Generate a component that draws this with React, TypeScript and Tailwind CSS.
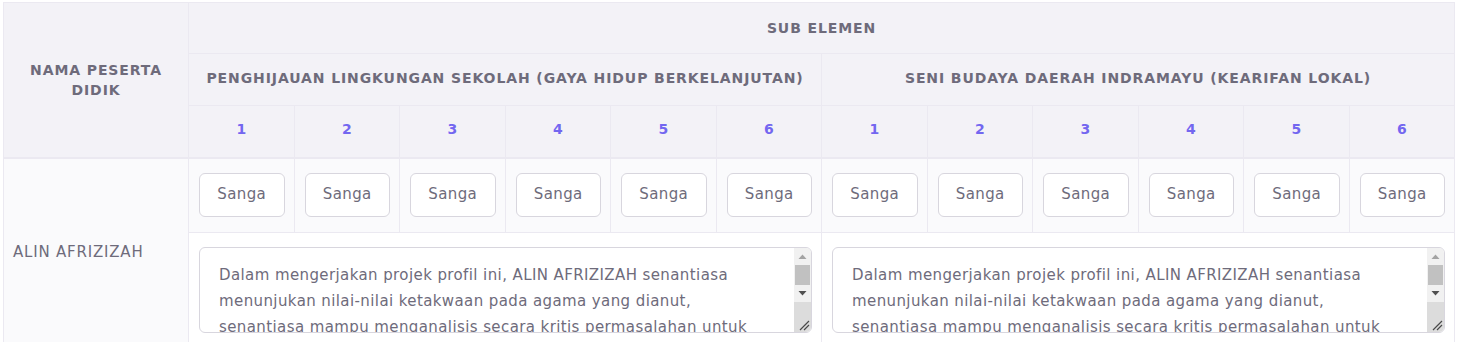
import React from "react";

const groups = [
  "PENGHIJAUAN LINGKUNGAN SEKOLAH (GAYA HIDUP BERKELANJUTAN)",
  "SENI BUDAYA DAERAH INDRAMAYU (KEARIFAN LOKAL)",
];
const subs = [1, 2, 3, 4, 5, 6];

const deskripsi =
  "Dalam mengerjakan projek profil ini, ALIN AFRIZIZAH senantiasa\nmenunjukan nilai-nilai ketakwaan pada agama yang dianut,\nsenantiasa mampu menganalisis secara kritis permasalahan untuk\nmenemukan solusi yang tepat, serta mampu bekerja sama dengan\nteman-temannya dalam menyelesaikan tugas projek.";

function FakeScrollbar() {
  return (
    <div className="absolute top-[1px] bottom-[1px] right-[1px] w-[17px] bg-[#f1f1f1] flex flex-col items-center rounded-tr-[5px] rounded-br-[5px] overflow-hidden">
      <svg width="17" height="17" viewBox="0 0 17 17" className="shrink-0">
        <path d="M4.5 11 L8.5 6.5 L12.5 11 Z" fill="#a3a3a3" />
      </svg>
      <div className="w-[15px] h-[20px] bg-[#c1c1c1] shrink-0" />
      <svg width="17" height="17" viewBox="0 0 17 17" className="shrink-0">
        <path d="M4.5 6 L8.5 10.5 L12.5 6 Z" fill="#505050" />
      </svg>
      <div className="flex-1 w-full bg-[#dcdcdc] flex items-end justify-end">
        <svg width="14" height="14" viewBox="0 0 14 14">
          <path d="M3 12 L12 3 M7 12 L12 7" stroke="#4a4a4a" strokeWidth="1.2" />
        </svg>
      </div>
    </div>
  );
}

export default function App() {
  return (
    <div
      className="bg-white pl-[3px] pt-[2px] w-[1457px] h-[342px] overflow-hidden text-[#6e6b7b]"
      style={{ fontFamily: '"DejaVu Sans", "Open Sans", sans-serif' }}
    >
      <table className="table-fixed border-collapse w-[1451px]">
        <colgroup>
          <col className="w-[185px]" />
          {Array.from({ length: 12 }).map((_, i) => (
            <col key={i} className="w-[105.5px]" />
          ))}
        </colgroup>
        <thead className="bg-[#f3f2f7] text-[14px] font-bold tracking-[0.9px] uppercase">
          <tr className="h-[51px]">
            <th
              rowSpan={3}
              className="border border-[#ebe9f1] border-b-2 text-center leading-[20px] whitespace-nowrap"
            >
              NAMA PESERTA
              <br />
              DIDIK
            </th>
            <th colSpan={12} className="border border-[#ebe9f1] text-center">
              SUB ELEMEN
            </th>
          </tr>
          <tr className="h-[52px]">
            {groups.map((g) => (
              <th key={g} colSpan={6} className="border border-[#ebe9f1] text-center whitespace-nowrap pb-[3px]">
                {g}
              </th>
            ))}
          </tr>
          <tr className="h-[52px]">
            {groups.map((g) =>
              subs.map((n) => (
                <th
                  key={g + n}
                  className="border border-[#ebe9f1] border-b-2 text-center text-[#7367f0] tracking-normal pb-[3px]"
                >
                  {n}
                </th>
              ))
            )}
          </tr>
        </thead>
        <tbody className="text-[15px] tracking-[0.4px]">
          <tr className="bg-[#fafafc]">
            <td rowSpan={2} className="border border-[#ebe9f1] px-[9px] align-middle tracking-[0.8px]">
              ALIN AFRIZIZAH
            </td>
            {groups.map((g) =>
              subs.map((n) => (
                <td key={g + n} className="border border-[#ebe9f1] pl-[10px] pr-[9px] pt-[14px] pb-[15px]">
                  <div className="h-[44px] rounded-[6px] border border-[#d8d6de] bg-white flex items-center justify-center overflow-hidden whitespace-nowrap">
                    Sanga
                  </div>
                </td>
              ))
            )}
          </tr>
          <tr className="bg-white">
            {groups.map((g) => (
              <td key={g} colSpan={6} className="border border-[#ebe9f1] pl-[10px] pr-[9px] pt-[14px] pb-[14px]">
                <div className="relative">
                  <textarea
                    readOnly
                    value={deskripsi}
                    className="block w-full h-[86px] rounded-[6px] border border-[#d8d6de] bg-white pl-[19px] pr-[24px] py-[14px] leading-[26px] text-[15px] tracking-[0.4px] text-[#6e6b7b] resize-none outline-none whitespace-pre overflow-hidden"
                  />
                  <FakeScrollbar />
                </div>
              </td>
            ))}
          </tr>
        </tbody>
      </table>
    </div>
  );
}
